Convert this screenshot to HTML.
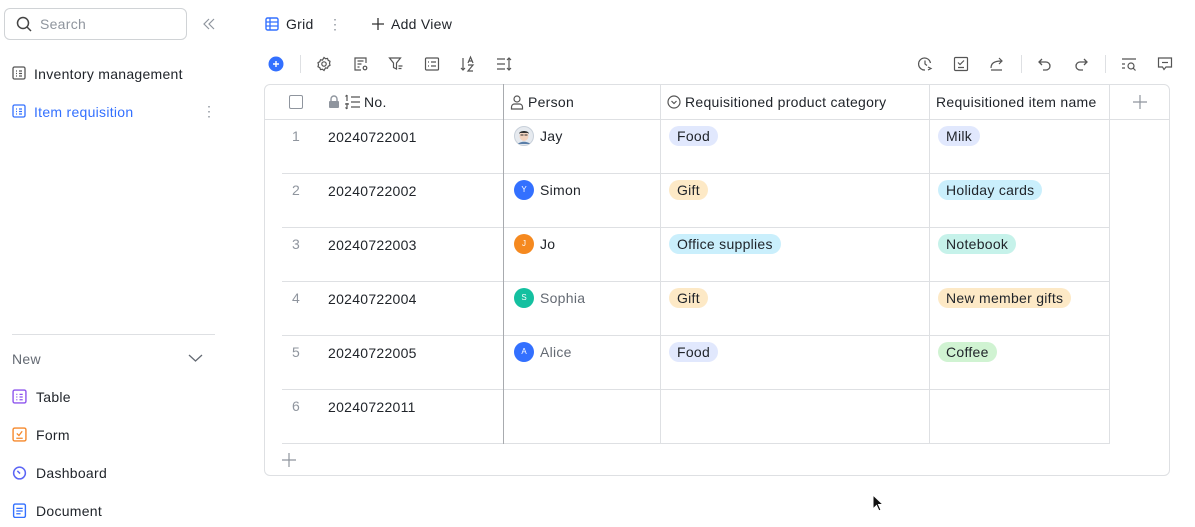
<!DOCTYPE html>
<html><head><meta charset="utf-8"><style>
*{box-sizing:border-box;margin:0;padding:0}
body{width:1195px;height:527px;background:#fff;font-family:"Liberation Sans",sans-serif;color:#1f2329;position:relative;overflow:hidden;font-size:14px;letter-spacing:.28px}
.a{position:absolute}
.t{position:absolute;white-space:nowrap;line-height:18px}
.tag{position:absolute;height:20px;line-height:20px;padding:0 8px;border-radius:10px;font-size:14px;white-space:nowrap}
.hl{position:absolute;height:1px;background:#dee0e3}
.vl{position:absolute;width:1px;background:#dee0e3}
.av{position:absolute;width:20px;height:20px;border-radius:50%;color:#fff;font-size:8px;line-height:20px;text-align:center;letter-spacing:0}
svg{position:absolute}
</style></head><body>
<div class="a" style="left:4px;top:8px;width:183px;height:32px;border:1px solid #d0d3d6;border-radius:6px"></div>
<svg style="left:15px;top:15px" width="18" height="18" viewBox="0 0 18 18"><circle cx="8" cy="8" r="5.5" fill="none" stroke="#444" stroke-width="1.5"/><path d="M12 12l4 4" stroke="#444" stroke-width="1.5"/></svg>
<div class="t" style="left:40px;top:15px;color:#8f959e">Search</div>
<svg style="left:202px;top:17px" width="14" height="14" viewBox="0 0 14 14"><path d="M7 2L2 7l5 5M12 2L7 7l5 5" fill="none" stroke="#8f959e" stroke-width="1.2"/></svg>
<svg style="left:12px;top:66px" width="14" height="14" viewBox="0 0 14 14"><rect x="1" y="1" width="12" height="12" rx="1.5" fill="none" stroke="#555" stroke-width="1.3"/><path d="M4 5h1M4 7.5h1M4 10h1M7 5h3M7 7.5h3M7 10h3" stroke="#555" stroke-width="1.2"/></svg>
<div class="t" style="left:34px;top:65px">Inventory management</div>
<svg style="left:12px;top:104px" width="14" height="14" viewBox="0 0 14 14"><rect x="1" y="1" width="12" height="12" rx="1.5" fill="none" stroke="#3370ff" stroke-width="1.3"/><path d="M4 5h1M4 7.5h1M4 10h1M7 5h3M7 7.5h3M7 10h3" stroke="#3370ff" stroke-width="1.2"/></svg>
<div class="t" style="left:34px;top:103px;color:#3370ff">Item requisition</div>
<div class="t" style="left:202px;top:102px;color:#8f959e">⋮</div>
<div class="hl" style="left:12px;top:334px;width:203px"></div>
<div class="t" style="left:12px;top:350px;color:#646a73">New</div>
<svg style="left:188px;top:352px" width="15" height="12" viewBox="0 0 15 12"><path d="M1 3l6.5 6L14 3" fill="none" stroke="#646a73" stroke-width="1.3"/></svg>
<svg style="left:12px;top:389px" width="15" height="15" viewBox="0 0 14 14"><rect x="1" y="1" width="12" height="12" rx="1.5" fill="none" stroke="#8d55ed" stroke-width="1.3"/><path d="M4 5h1M4 7.5h1M4 10h1M7 5h3M7 7.5h3M7 10h3" stroke="#8d55ed" stroke-width="1.2"/></svg>
<div class="t" style="left:36px;top:388px">Table</div>
<svg style="left:12px;top:427px" width="15" height="15" viewBox="0 0 14 14"><rect x="1" y="1" width="12" height="12" rx="1.5" fill="none" stroke="#f5882b" stroke-width="1.3"/><path d="M4.5 6l2 2 3-4M4 10.5h6" fill="none" stroke="#f5882b" stroke-width="1.2"/></svg>
<div class="t" style="left:36px;top:426px">Form</div>
<svg style="left:12px;top:465px" width="15" height="15" viewBox="0 0 14 14"><circle cx="7" cy="7.5" r="5.5" fill="none" stroke="#5b65f5" stroke-width="1.4"/><path d="M5 5.5l2.5 2.5" stroke="#5b65f5" stroke-width="1.4"/></svg>
<div class="t" style="left:36px;top:464px">Dashboard</div>
<svg style="left:12px;top:503px" width="15" height="15" viewBox="0 0 14 14"><rect x="1.5" y="1" width="11" height="12.5" rx="1.5" fill="none" stroke="#3370ff" stroke-width="1.3"/><path d="M4 5h6M4 7.5h6M4 10h4" stroke="#3370ff" stroke-width="1.2"/></svg>
<div class="t" style="left:36px;top:502px">Document</div>
<svg style="left:265px;top:17px" width="14" height="14" viewBox="0 0 14 14"><rect x="1" y="1" width="12" height="12" rx="1.5" fill="none" stroke="#3370ff" stroke-width="1.4"/><path d="M1 5h12M1 9h12M5 1v12" stroke="#3370ff" stroke-width="1.3"/></svg>
<div class="t" style="left:286px;top:15px">Grid</div>
<div class="t" style="left:328px;top:15px;color:#8f959e">⋮</div>
<svg style="left:371px;top:17px" width="14" height="14" viewBox="0 0 14 14"><path d="M7 1v12M1 7h12" stroke="#333" stroke-width="1.3"/></svg>
<div class="t" style="left:391px;top:15px">Add View</div>
<svg style="left:268px;top:56px" width="16" height="16" viewBox="0 0 16 16"><circle cx="8" cy="8" r="7.5" fill="#3370ff"/><path d="M8 5v6M5 8h6" stroke="#fff" stroke-width="1.4"/></svg>
<div class="vl" style="left:300px;top:55px;height:18px"></div>
<svg style="left:316px;top:56px" width="16" height="16" viewBox="0 0 16 16" fill="none" stroke="#555" stroke-width="1.2"><circle cx="8" cy="8" r="2.2"/><path d="M8 1.5l1.5 1.2 2-.3.7 1.9 1.8 1-.5 2 .5 2-1.8 1-.7 1.9-2-.3L8 14.5l-1.5-1.2-2 .3-.7-1.9-1.8-1 .5-2-.5-2 1.8-1 .7-1.9 2 .3z"/></svg>
<svg style="left:353px;top:56px" width="16" height="16" viewBox="0 0 16 16" fill="none" stroke="#555" stroke-width="1.2"><path d="M13 7V2H2v12h6"/><path d="M4.5 5h6M4.5 8h4M4.5 11h2"/><circle cx="12" cy="12" r="1.8"/></svg>
<svg style="left:388px;top:56px" width="16" height="16" viewBox="0 0 16 16" fill="none" stroke="#555" stroke-width="1.2"><path d="M1.5 2h11l-4 5v6l-3-1.5V7z"/><path d="M10.5 10h4M10.5 12.5h3"/></svg>
<svg style="left:424px;top:56px" width="16" height="16" viewBox="0 0 16 16" fill="none" stroke="#555" stroke-width="1.2"><rect x="1.5" y="2" width="13" height="12" rx="1"/><path d="M4 6h1M4 10h1M7 6h5M7 10h5"/></svg>
<svg style="left:460px;top:55px" width="16" height="18" viewBox="0 0 16 18" fill="none" stroke="#555" stroke-width="1.2"><path d="M3 3v12M1 13l2 2 2-2"/><path d="M8 8l2.5-6L13 8M9 6h3M8 10h5l-5 6h5"/></svg>
<svg style="left:496px;top:56px" width="16" height="16" viewBox="0 0 16 16" fill="none" stroke="#555" stroke-width="1.2"><path d="M1 3h8M1 8h8M1 13h8M13 2v12M11 4l2-2 2 2M11 12l2 2 2-2"/></svg>
<svg style="left:917px;top:56px" width="16" height="16" viewBox="0 0 16 16" fill="none" stroke="#555" stroke-width="1.2"><path d="M13.5 7A6 6 0 1 0 8 14"/><path d="M8 4.5V8l2 1.5M11 11l3 1.5-3 1.5"/></svg>
<svg style="left:953px;top:56px" width="16" height="16" viewBox="0 0 16 16" fill="none" stroke="#555" stroke-width="1.2"><rect x="1.5" y="1.5" width="13" height="13" rx="1"/><path d="M5 6.5l2 2 4-4M5 11.5h6"/></svg>
<svg style="left:989px;top:56px" width="16" height="16" viewBox="0 0 16 16" fill="none" stroke="#555" stroke-width="1.2"><path d="M2 14h11M2 12c0-5 4-7 10-7M10 2l3 3-3 3"/></svg>
<div class="vl" style="left:1021px;top:55px;height:18px"></div>
<svg style="left:1037px;top:56px" width="16" height="16" viewBox="0 0 16 16" fill="none" stroke="#555" stroke-width="1.3"><path d="M5 3L2 6l3 3M2 6h7a4 4 0 0 1 0 8H6"/></svg>
<svg style="left:1073px;top:56px" width="16" height="16" viewBox="0 0 16 16" fill="none" stroke="#555" stroke-width="1.3"><path d="M11 3l3 3-3 3M14 6H7a4 4 0 0 0 0 8h3"/></svg>
<div class="vl" style="left:1105px;top:55px;height:18px"></div>
<svg style="left:1121px;top:56px" width="16" height="16" viewBox="0 0 16 16" fill="none" stroke="#555" stroke-width="1.2"><path d="M1 3h14M1 8h3M1 12h3"/><circle cx="10" cy="10" r="3"/><path d="M12 12l2.5 2.5"/></svg>
<svg style="left:1157px;top:56px" width="16" height="16" viewBox="0 0 16 16" fill="none" stroke="#555" stroke-width="1.2"><path d="M1.5 2h13v9H9l-2 2.5L5.5 11h-4z"/><path d="M5 6.5h6"/></svg>
<div class="a" style="left:264px;top:84px;width:906px;height:392px;border:1px solid #dee0e3;border-radius:6px"></div>
<div class="hl" style="left:264px;top:119px;width:906px"></div>
<div class="hl" style="left:282px;top:173px;width:828px"></div>
<div class="hl" style="left:282px;top:227px;width:828px"></div>
<div class="hl" style="left:282px;top:281px;width:828px"></div>
<div class="hl" style="left:282px;top:335px;width:828px"></div>
<div class="hl" style="left:282px;top:389px;width:828px"></div>
<div class="hl" style="left:282px;top:443px;width:828px"></div>
<div class="vl" style="left:503px;top:84px;height:360px;background:#a8abaf"></div>
<div class="vl" style="left:660px;top:84px;height:360px"></div>
<div class="vl" style="left:929px;top:84px;height:360px"></div>
<div class="vl" style="left:1109px;top:84px;height:360px"></div>
<div class="a" style="left:289px;top:95px;width:14px;height:14px;border:1.5px solid #8f959e;border-radius:2px"></div>
<svg style="left:328px;top:95px" width="12" height="14" viewBox="0 0 12 14"><rect x="1" y="6" width="10" height="7" rx="1" fill="#8f959e"/><path d="M3 6V4a3 3 0 0 1 6 0v2" fill="none" stroke="#8f959e" stroke-width="1.4"/></svg>
<svg style="left:344px;top:94px" width="18" height="16" viewBox="0 0 18 16" fill="none" stroke="#555" stroke-width="1.2"><path d="M3 1v6M1.5 2.5L3 1M1 10h4M3 9v6M1.5 13.5L3 15M7 3h9M7 8h9M7 13h9"/></svg>
<div class="t" style="left:364px;top:93px">No.</div>
<svg style="left:510px;top:94px" width="14" height="16" viewBox="0 0 14 16" fill="none" stroke="#555" stroke-width="1.2"><circle cx="7" cy="5" r="3"/><path d="M1.5 15v-2a3 3 0 0 1 3-3h5a3 3 0 0 1 3 3v2z"/></svg>
<div class="t" style="left:528px;top:93px">Person</div>
<svg style="left:667px;top:95px" width="14" height="14" viewBox="0 0 14 14" fill="none" stroke="#555" stroke-width="1.2"><circle cx="7" cy="7" r="6"/><path d="M4.5 6l2.5 2.5L9.5 6"/></svg>
<div class="t" style="left:685px;top:93px">Requisitioned product category</div>
<div class="t" style="left:936px;top:93px">Requisitioned item name</div>
<svg style="left:1133px;top:95px" width="14" height="14" viewBox="0 0 14 14"><path d="M7 0v14M0 7h14" stroke="#8f959e" stroke-width="1.2"/></svg>
<div class="t" style="left:292px;top:127px;color:#8f959e">1</div>
<div class="t" style="left:328px;top:128px">20240722001</div>
<svg style="left:514px;top:126px" width="20" height="20" viewBox="0 0 20 20"><circle cx="10" cy="10" r="9.5" fill="#e6eaef" stroke="#c8d0da"/><ellipse cx="10" cy="10" rx="4.5" ry="5" fill="#f3d2bd"/><path d="M5 8c0-4 10-4 10 0l-1-1H6z" fill="#333"/><path d="M6.5 9h3M10.5 9h3" stroke="#333" stroke-width="1"/><path d="M4 18c2-3 10-3 12 0" fill="#5a7ea8"/></svg>
<div class="t" style="left:540px;top:127px">Jay</div>
<div class="tag" style="left:669px;top:126px;background:#e1e8fd">Food</div>
<div class="tag" style="left:938px;top:126px;background:#e1e8fd">Milk</div>
<div class="t" style="left:292px;top:181px;color:#8f959e">2</div>
<div class="t" style="left:328px;top:182px">20240722002</div>
<div class="av" style="left:514px;top:180px;background:#3370ff">Y</div>
<div class="t" style="left:540px;top:181px">Simon</div>
<div class="tag" style="left:669px;top:180px;background:#fde9c6">Gift</div>
<div class="tag" style="left:938px;top:180px;background:#caeffc">Holiday cards</div>
<div class="t" style="left:292px;top:235px;color:#8f959e">3</div>
<div class="t" style="left:328px;top:236px">20240722003</div>
<div class="av" style="left:514px;top:234px;background:#f5891f">J</div>
<div class="t" style="left:540px;top:235px">Jo</div>
<div class="tag" style="left:669px;top:234px;background:#caeffc">Office supplies</div>
<div class="tag" style="left:938px;top:234px;background:#c6f2ea">Notebook</div>
<div class="t" style="left:292px;top:289px;color:#8f959e">4</div>
<div class="t" style="left:328px;top:290px">20240722004</div>
<div class="av" style="left:514px;top:288px;background:#14c0a0">S</div>
<div class="t" style="left:540px;top:289px;color:#646a73">Sophia</div>
<div class="tag" style="left:669px;top:288px;background:#fde9c6">Gift</div>
<div class="tag" style="left:938px;top:288px;background:#fde9c6">New member gifts</div>
<div class="t" style="left:292px;top:343px;color:#8f959e">5</div>
<div class="t" style="left:328px;top:344px">20240722005</div>
<div class="av" style="left:514px;top:342px;background:#3370ff">A</div>
<div class="t" style="left:540px;top:343px;color:#646a73">Alice</div>
<div class="tag" style="left:669px;top:342px;background:#e1e8fd">Food</div>
<div class="tag" style="left:938px;top:342px;background:#d0f3d2">Coffee</div>
<div class="t" style="left:292px;top:397px;color:#8f959e">6</div>
<div class="t" style="left:328px;top:398px">20240722011</div>
<svg style="left:282px;top:453px" width="14" height="14" viewBox="0 0 14 14"><path d="M7 0v14M0 7h14" stroke="#8f959e" stroke-width="1.2"/></svg>
<svg style="left:872px;top:494px" width="12" height="18" viewBox="0 0 12 18"><path d="M1 1v14l3.5-3.5 2.5 5.5 2-1-2.5-5.5H11z" fill="#111" stroke="#fff" stroke-width="1"/></svg>
</body></html>
